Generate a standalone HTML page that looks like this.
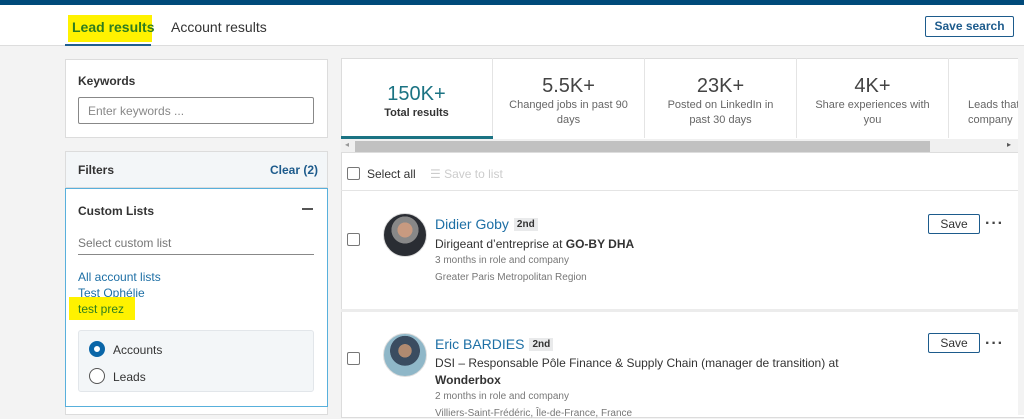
<!DOCTYPE html>
<html><head><meta charset="utf-8"><style>
*{box-sizing:border-box;margin:0;padding:0}
body{width:1024px;height:415px;overflow:hidden;background:#f3f3f3;font-family:"Liberation Sans",sans-serif;color:#333;position:relative;font-size:12px}
.a{position:absolute}
.card{position:absolute;background:#fff;border:1px solid #dcdcdc}
.link{color:#1d6fa5}
.g{color:#777;font-size:10px}
.cb{position:absolute;width:13px;height:13px;border:1px solid #777;border-radius:2px;background:#fff}
.stat{position:absolute;top:0;height:80px;border-right:1px solid #e4e4e4;text-align:center;color:#555}
.stat b{display:block;font-weight:normal;font-size:20px;margin-top:17px;color:#444}
.stat span{display:block;font-size:11px;line-height:15px;color:#666}
.btn{position:absolute;border:1px solid #1d5b8c;border-radius:2px;background:#fff;color:#1d5b8c;font-size:12px;text-align:center}
.dots{position:absolute;font-size:16px;font-weight:bold;letter-spacing:1px;color:#444;line-height:10px}
.badge{background:#e9eaeb;font-size:10px;padding:1px 3px;color:#333;font-weight:bold;margin-left:5px;vertical-align:2px}
</style></head><body>
<div class="a" style="left:0;top:0;width:1024px;height:5px;background:#004a7a"></div>
<div class="a" style="left:0;top:5px;width:1024px;height:41px;background:#fff;border-bottom:1px solid #ddd"></div>
<div class="a" style="left:68px;top:15px;width:84px;height:27px;background:#fff200"></div>
<div class="a" style="left:72px;top:19px;font-size:14px;color:#2e7d1f;font-weight:bold">Lead results</div>
<div class="a" style="left:65px;top:44px;width:86px;height:2px;background:#1f5f8f"></div>
<div class="a" style="left:171px;top:19px;font-size:14px;color:#333">Account results</div>
<div class="btn" style="left:925px;top:16px;width:89px;height:21px;line-height:19px;font-weight:bold">Save search</div>

<div class="card" style="left:65px;top:59px;width:263px;height:79px"></div>
<div class="a" style="left:78px;top:74px;font-size:12px;font-weight:bold;color:#333">Keywords</div>
<div class="a" style="left:78px;top:97px;width:236px;height:27px;border:1px solid #888;border-radius:2px;background:#fff;color:#888;padding:6px 9px;font-size:12px">Enter keywords ...</div>

<div class="card" style="left:65px;top:151px;width:263px;height:264px"></div>
<div class="a" style="left:65px;top:151px;width:263px;height:37px;background:#f3f6f8;border:1px solid #dcdcdc"></div>
<div class="a" style="left:78px;top:163px;font-weight:bold">Filters</div>
<div class="a link" style="left:270px;top:163px;font-weight:bold;color:#1d5b8c">Clear (2)</div>
<div class="a" style="left:65px;top:188px;width:263px;height:219px;border:1px solid #58b0dc"></div>
<div class="a" style="left:78px;top:204px;font-weight:bold">Custom Lists</div>
<div class="a" style="left:302px;top:208px;width:11px;height:2px;background:#555"></div>
<div class="a" style="left:78px;top:236px;color:#777;font-size:12px">Select custom list</div>
<div class="a" style="left:78px;top:254px;width:236px;height:1px;background:#888"></div>
<div class="a link" style="left:78px;top:270px;font-size:12px">All account lists</div>
<div class="a link" style="left:78px;top:286px;font-size:12px">Test Ophélie</div>
<div class="a" style="left:69px;top:297px;width:66px;height:23px;background:#fff200"></div>
<div class="a" style="left:78px;top:302px;font-size:12px;color:#2e7d1f">test prez</div>
<div class="a" style="left:78px;top:330px;width:236px;height:62px;background:#f3f6f8;border:1px solid #e2e6ea;border-radius:3px"></div>
<div class="a" style="left:89px;top:341px;width:16px;height:16px;border-radius:50%;border:5px solid #0a66a8;background:#fff"></div>
<div class="a" style="left:113px;top:343px;font-size:12px">Accounts</div>
<div class="a" style="left:89px;top:368px;width:16px;height:16px;border-radius:50%;border:1px solid #555;background:#fff"></div>
<div class="a" style="left:113px;top:370px;font-size:12px">Leads</div>

<div class="card" style="left:341px;top:58px;width:700px;height:360px"></div>
<div class="a" style="left:341px;top:58px;width:683px;height:80px;overflow:hidden">
 <div class="stat" style="left:0;width:152px"><b style="color:#1b7383;margin-top:25px">150K+</b><span style="color:#333;font-weight:bold">Total results</span></div>
 <div class="stat" style="left:152px;width:152px"><b>5.5K+</b><span>Changed jobs in past 90<br>days</span></div>
 <div class="stat" style="left:304px;width:152px"><b>23K+</b><span>Posted on LinkedIn in<br>past 30 days</span></div>
 <div class="stat" style="left:456px;width:152px"><b>4K+</b><span>Share experiences with<br>you</span></div>
 <div class="stat" style="left:608px;width:152px;text-align:left;padding-left:19px"><b>&nbsp;</b><span>Leads that<br>company</span></div>
</div>
<div class="a" style="left:341px;top:136px;width:152px;height:3px;background:#1b7383"></div>
<div class="a" style="left:341px;top:139px;width:677px;height:14px;background:#f0f0f0;border-bottom:1px solid #ddd"></div>
<div class="a" style="left:355px;top:141px;width:575px;height:11px;background:#c1c1c1"></div>
<div class="a" style="left:345px;top:140px;font-size:8px;color:#999">◂</div>
<div class="a" style="left:1007px;top:140px;font-size:8px;color:#555">▸</div>
<div class="cb" style="left:347px;top:167px"></div>
<div class="a" style="left:367px;top:167px;font-size:12px">Select all</div>
<div class="a" style="left:430px;top:167px;font-size:12px;color:#ccc">☰ Save to list</div>
<div class="a" style="left:341px;top:190px;width:677px;height:1px;background:#e4e4e4"></div>

<div class="cb" style="left:347px;top:233px"></div>
<div class="a" style="left:383px;top:213px;width:44px;height:44px;border-radius:50%;background:radial-gradient(circle at 50% 38%,#c89a80 0 22%,#888 23% 40%,#2a2d33 41%);border:1px solid #ddd"></div>
<div class="a link" style="left:435px;top:216px;font-size:14px">Didier Goby<span class="badge">2nd</span></div>
<div class="a" style="left:435px;top:237px;font-size:12px">Dirigeant d’entreprise at <b>GO-BY DHA</b></div>
<div class="a g" style="left:435px;top:255px">3 months in role and company</div>
<div class="a g" style="left:435px;top:272px">Greater Paris Metropolitan Region</div>
<div class="btn" style="left:928px;top:214px;width:52px;height:20px;line-height:18px;color:#333">Save</div>
<div class="dots" style="left:985px;top:219px">···</div>
<div class="a" style="left:341px;top:309px;width:677px;height:3px;background:#ececec"></div>

<div class="cb" style="left:347px;top:352px"></div>
<div class="a" style="left:383px;top:333px;width:44px;height:44px;border-radius:50%;background:radial-gradient(circle at 50% 40%,#b08a70 0 20%,#3a4c60 21% 45%,#8fb7c8 46%);border:1px solid #ddd"></div>
<div class="a link" style="left:435px;top:336px;font-size:14px">Eric BARDIES<span class="badge">2nd</span></div>
<div class="a" style="left:435px;top:356px;font-size:12px">DSI – Responsable Pôle Finance &amp; Supply Chain (manager de transition) at</div>
<div class="a" style="left:435px;top:373px;font-size:12px;font-weight:bold">Wonderbox</div>
<div class="a g" style="left:435px;top:391px">2 months in role and company</div>
<div class="a g" style="left:435px;top:408px">Villiers-Saint-Frédéric, Île-de-France, France</div>
<div class="btn" style="left:928px;top:333px;width:52px;height:20px;line-height:18px;color:#333">Save</div>
<div class="dots" style="left:985px;top:339px">···</div>
<div class="a" style="left:1018px;top:58px;width:6px;height:357px;background:#f3f3f3"></div>
</body></html>
